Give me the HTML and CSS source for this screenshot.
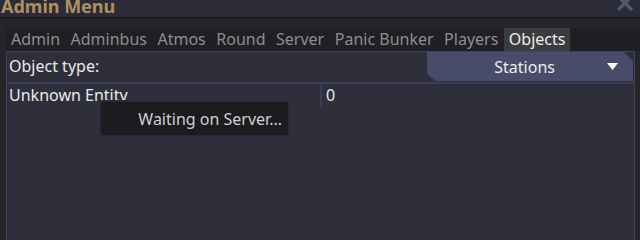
FILE: index.html
```html
<!DOCTYPE html>
<html>
<head>
<meta charset="utf-8">
<link rel="stylesheet" href="styles.css">
</head>
<body>
<div class="window">
  <div class="titlebar">
    <span class="title">Admin Menu</span>
    <svg class="close" width="18" height="16" viewBox="0 0 18 16"><path d="M2 -2 L16 12 M16 -2 L2 12" stroke="#4e5a6a" stroke-width="3.5" fill="none"/></svg>
  </div>
  <div class="tabs">
    <span class="tab">Admin</span>
    <span class="tab">Adminbus</span>
    <span class="tab">Atmos</span>
    <span class="tab">Round</span>
    <span class="tab">Server</span>
    <span class="tab">Panic Bunker</span>
    <span class="tab">Players</span>
    <span class="tab active">Objects</span>
  </div>
  <div class="panel">
    <div class="row-top">
      <span class="label">Object type:</span>
      <div class="dropdown">
        <span class="dd-text">Stations</span>
        <svg class="dd-arrow" width="11" height="7" viewBox="0 0 11 7"><path d="M0 0 H11 L5.5 7 Z" fill="#ffffff"/></svg>
      </div>
    </div>
    <div class="sep"></div>
    <div class="grid">
      <div class="cell name">Unknown Entity</div>
      <div class="cell val">0</div>
    </div>
    <div class="popup"><span>Waiting on Server...</span></div>
  </div>
</div>
</body>
</html>
```
FILE: styles.css
```css
html, body {
  margin: 0;
  padding: 0;
  background: #25252a;
  height: 100%;
  overflow: hidden;
  font-family: "Noto Sans", "DejaVu Sans", sans-serif;
}
.window {
  display: flex;
  flex-direction: column;
  height: 100vh;
}
.titlebar {
  height: 17px;
  flex: none;
  background: #2b2a37;
  border-bottom: 2px solid #1c1c21;
  display: flex;
  justify-content: space-between;
  align-items: flex-end;
  overflow: hidden;
}
.title {
  color: #b08f5f;
  font-weight: bold;
  font-size: 18px;
  line-height: 18px;
  margin-bottom: 2px;
  padding-left: 1px;
}
.close {
  margin-right: 6px;
  margin-bottom: 3px;
}
.tabs {
  flex: none;
  margin: 9px 0 0 6px;
  height: 23px;
  background: #1f1f24;
  display: flex;
}
.tab {
  color: #8e8e8e;
  font-size: 16px;
  line-height: 23px;
  padding: 0 5px;
  margin-right: 0.5px;
}
.tab.active {
  background: #3c3c3e;
  color: #ececec;
}
.panel {
  position: relative;
  flex: 1;
  margin: 0 5px 0 6px;
  border: 1px solid #3e4160;
  border-bottom: none;
  background: #2f2f3b;
}
.row-top {
  display: flex;
  justify-content: space-between;
  align-items: stretch;
  height: 29px;
}
.label {
  color: #eaeaea;
  font-size: 16px;
  line-height: 29px;
  padding-left: 2px;
}
.dropdown {
  width: 206px;
  margin-right: 1px;
  background: #484b6a;
  clip-path: polygon(0 0, calc(100% - 9px) 0, 100% 9px, 100% 100%, 8px 100%, 0 calc(100% - 8px));
  display: flex;
  align-items: center;
  justify-content: flex-end;
  padding-right: 15px;
  box-sizing: border-box;
}
.dd-text {
  color: #ececec;
  font-size: 16px;
  margin-right: 52px;
  margin-top: 1px;
}
.dd-arrow {
  margin-top: -1px;
}
.sep {
  height: 2px;
  margin-top: 1px;
  background: #3b3d58;
}
.grid {
  display: grid;
  grid-template-columns: 313px 1fr;
}
.cell {
  color: #eaeaea;
  font-size: 16px;
  line-height: 22px;
  height: 23px;
}
.name {
  padding-left: 2px;
}
.val {
  border-left: 2px solid #3b3d58;
  padding-left: 4px;
}
.popup {
  position: absolute;
  left: 92px;
  top: 48px;
  width: 191px;
  height: 37px;
  box-sizing: border-box;
  border: 2px solid #2b2b35;
  background: #1b1b20;
  display: flex;
  align-items: center;
  justify-content: flex-end;
  padding-right: 6px;
}
.popup span {
  color: #cfcfcf;
  font-size: 16px;
}
```
